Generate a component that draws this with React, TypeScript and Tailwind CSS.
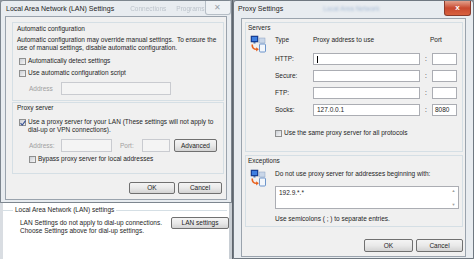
import type { ReactNode } from "react";

function Check({ checked }: { checked?: boolean }) {
  return (
    <span className="relative inline-flex h-[7px] w-[7px] shrink-0 border border-[#8e8f8f] bg-linear-to-br from-[#cbcfd5] to-[#f6f6f6]">
      {checked && (
        <svg className="absolute -left-[1px] -top-[1px]" width="8" height="8" viewBox="0 0 8 8">
          <path d="M1.5 4.2 L3.2 6 L6.6 1.6" stroke="#3d5596" strokeWidth="1.2" fill="none" />
        </svg>
      )}
    </span>
  );
}

function Btn({ children, className }: { children: ReactNode; className: string }) {
  return (
    <div
      className={`flex items-center justify-center whitespace-nowrap rounded-[2px] border border-[#707070] bg-linear-to-b from-[#f4f4f4] via-[#e9e9e9] to-[#d3d3d3] text-[#1e1e1e] ${className}`}
    >
      {children}
    </div>
  );
}

function Field({ className, children }: { className: string; children?: ReactNode }) {
  return (
    <div className={`flex items-center border border-[#abadb3] bg-white ${className}`}>{children}</div>
  );
}

function ServerIcon() {
  return (
    <svg width="17" height="18" viewBox="0 0 17 18" className="shrink-0">
      <rect x="1" y="1" width="7" height="6" fill="#1d48a8" stroke="#0d2a6a" strokeWidth="0.5" />
      <rect x="2" y="2" width="5" height="4" fill="#3f7fe0" />
      <rect x="3.5" y="7" width="2" height="1.5" fill="#4a6ea8" />
      <rect x="9" y="3" width="6" height="5" fill="#c9d6e8" stroke="#8aa0c0" strokeWidth="0.5" />
      <path d="M2.2 9.5 Q2 14.5 7 14.3" stroke="#e8601c" strokeWidth="1.6" fill="none" />
      <path d="M6.2 12.2 L8.8 14.3 L6.2 16.4 Z" fill="#e8601c" />
      <rect x="9.5" y="9" width="6" height="8" rx="1" fill="#f2f6fb" stroke="#4a7cc0" strokeWidth="0.8" />
    </svg>
  );
}

function LanDialog() {
  return (
    <div className="flex h-[203px] flex-col rounded-t-[3px] border border-[#7d868f] bg-[#e8ecf0]">
      {/* title bar */}
      <div className="flex h-[15px] items-center overflow-hidden whitespace-nowrap">
        <span className="shrink-0 pl-[5px] text-[7px] text-[#1e1e1e]">Local Area Network (LAN) Settings</span>
        <span className="ml-[16px] shrink-0 text-[#bcc3cb] blur-[0.5px]">Connections</span>
        <span className="ml-[10px] shrink-0 text-[#bcc3cb] blur-[0.5px]">Programs</span>
        <div className="ml-auto mr-[1px] flex h-[14px] w-[26px] shrink-0 items-center justify-center self-start rounded-b-[3px] border border-t-0 border-[#b6bec6] bg-[#eef1f4] text-[8px] text-[#9aa2aa]">
          ✕
        </div>
      </div>

      {/* panel */}
      <div className="mx-[4px] flex h-[184px] flex-col border border-[#9aa3ad] bg-[#f0f0f0]">
        {/* Automatic configuration */}
        <div className="ml-[6px] mt-[5px] flex w-[212px] flex-col border border-[#d5dfe5]">
          <span className="ml-[4px] mt-[2px]">Automatic configuration</span>
          <span className="ml-[4px] mt-[3px] whitespace-nowrap">
            Automatic configuration may override manual settings.&nbsp; To ensure the
            <br />
            use of manual settings, disable automatic configuration.
          </span>
          <div className="ml-[6px] mt-[5px] flex h-[8px] items-center gap-[2px]">
            <Check />
            <span>Automatically detect settings</span>
          </div>
          <div className="ml-[6px] mt-[4px] flex h-[8px] items-center gap-[2px]">
            <Check />
            <span>Use automatic configuration script</span>
          </div>
          <div className="mt-[5px] flex items-center pb-[5px]">
            <span className="ml-[16px] w-[32px] text-[#a0a0a0]">Address</span>
            <div className="h-[13px] w-[110px] border border-[#c9cbd0] bg-[#f4f4f4]" />
          </div>
        </div>

        {/* Proxy server */}
        <div className="ml-[6px] mt-[1px] flex w-[212px] flex-col border border-[#d5dfe5] pb-[10px]">
          <span className="ml-[4px] mt-[1px]">Proxy server</span>
          <div className="ml-[6px] mt-[6px] flex items-start gap-[2px]">
            <span className="mt-[1px] flex">
              <Check checked />
            </span>
            <span className="whitespace-nowrap">
              Use a proxy server for your LAN (These settings will not apply to
              <br />
              dial-up or VPN connections).
            </span>
          </div>
          <div className="mt-[5px] flex h-[13px] items-center">
            <span className="ml-[16px] w-[32px] text-[#a0a0a0]">Address:</span>
            <div className="h-[13px] w-[51px] border border-[#c9cbd0] bg-[#f4f4f4]" />
            <span className="ml-[8px] w-[22px] text-[#a0a0a0]">Port:</span>
            <div className="h-[13px] w-[28px] border border-[#c9cbd0] bg-[#f4f4f4]" />
            <Btn className="ml-[4px] h-[13px] w-[43px]">Advanced</Btn>
          </div>
          <div className="ml-[16px] mt-[3px] flex h-[8px] items-center gap-[2px]">
            <Check />
            <span>Bypass proxy server for local addresses</span>
          </div>
        </div>

        <div className="mr-[4px] mt-[8px] flex justify-end gap-[3px]">
          <Btn className="h-[12px] w-[46px]">OK</Btn>
          <Btn className="h-[12px] w-[44px]">Cancel</Btn>
        </div>
      </div>
    </div>
  );
}

function InternetOptionsPart() {
  return (
    <div className="flex flex-1 flex-col border-l-[3px] border-r-[3px] border-l-[#d9dde2] border-r-[#c8ced4] bg-white">
      <div className="mt-[3px] flex h-[8px] items-center">
        <div className="h-px w-[10px] bg-[#d5dfe5]" />
        <span className="px-[2px]">Local Area Network (LAN) settings</span>
        <div className="mr-[2px] h-px flex-1 bg-[#d5dfe5]" />
      </div>
      <div className="mt-[3px] flex">
        <span className="ml-[17px] mt-[2px] whitespace-nowrap">
          LAN Settings do not apply to dial-up connections.
          <br />
          Choose Settings above for dial-up settings.
        </span>
        <Btn className="ml-auto h-[12px] w-[58px]">LAN settings</Btn>
      </div>
    </div>
  );
}

function ProxyDialog() {
  const rows = [
    { label: "HTTP:", addr: "", port: "", caret: true },
    { label: "Secure:", addr: "", port: "" },
    { label: "FTP:", addr: "", port: "" },
    { label: "Socks:", addr: "127.0.0.1", port: "8080" },
  ];

  return (
    <div className="flex flex-1 flex-col rounded-t-[3px] border border-[#6f7881] bg-[#e8ecf0]">
      {/* title bar */}
      <div className="flex h-[16px] items-center overflow-hidden whitespace-nowrap">
        <span className="shrink-0 pl-[4px] text-[7px]">Proxy Settings</span>
        <span className="ml-[40px] shrink-0 text-[#a9bdd6] blur-[0.8px]">Local Area Network</span>
        <div className="ml-auto mr-[2px] flex h-[15px] w-[27px] shrink-0 items-center justify-center self-start rounded-b-[3px] border border-t-0 border-[#8a3b2c] bg-linear-to-b from-[#e2a08c] via-[#c8492f] to-[#d8613f] text-[8px] font-bold text-white">
          x
        </div>
      </div>

      {/* panel */}
      <div className="mb-[1px] ml-[7px] mr-[7px] mt-[1px] flex flex-1 flex-col border border-[#9aa3ad] bg-[#f0f0f0]">
        {/* Servers */}
        <div className="ml-[3px] mt-[3px] flex w-[218px] flex-col border border-[#d5dfe5] pb-[14px]">
          <span className="ml-[2px] mt-[1px]">Servers</span>
          <div className="mt-[3px] flex">
            <div className="ml-[4px]">
              <ServerIcon />
            </div>
            <div className="ml-[8px] flex flex-col">
              <div className="mt-[1px] flex h-[8px]">
                <span className="w-[38px]">Type</span>
                <span className="w-[117px]">Proxy address to use</span>
                <span>Port</span>
              </div>
              <div className="mt-[9px] flex flex-col gap-[5px]">
                {rows.map((r) => (
                  <div key={r.label} className="flex h-[12px] items-center">
                    <span className="w-[38px]">{r.label}</span>
                    <Field className="h-[12px] w-[107px] pl-[3px]">
                      {r.caret && <span className="h-[7px] w-px bg-black" />}
                      {r.addr}
                    </Field>
                    <span className="w-[12px] text-center">:</span>
                    <Field className="h-[12px] w-[25px] pl-[2px]">{r.port}</Field>
                  </div>
                ))}
              </div>
              <div className="mt-[13px] flex h-[8px] items-center gap-[2px]">
                <Check />
                <span>Use the same proxy server for all protocols</span>
              </div>
            </div>
          </div>
        </div>

        {/* Exceptions */}
        <div className="ml-[3px] mt-[3px] flex w-[218px] flex-col border border-[#d5dfe5] pb-[3px]">
          <span className="ml-[2px] mt-[1px]">Exceptions</span>
          <div className="mt-[4px] flex">
            <div className="ml-[4px]">
              <ServerIcon />
            </div>
            <div className="ml-[8px] flex flex-col">
              <span className="mt-[1px]">Do not use proxy server for addresses beginning with:</span>
              <div className="mt-[8px] flex h-[23px] w-[184px] border border-[#abadb3] bg-white">
                <span className="flex-1 pl-[3px] pt-[2px]">192.9.*.*</span>
                <div className="flex w-[9px] flex-col items-center justify-between py-[1px] text-[4px] leading-[5px] text-[#a0a0a0]">
                  <span>▲</span>
                  <span>▼</span>
                </div>
              </div>
              <span className="mt-[6px]">Use semicolons ( ; ) to separate entries.</span>
            </div>
          </div>
        </div>

        <div className="mr-[2px] mt-[12px] flex justify-end gap-[3px]">
          <Btn className="h-[13px] w-[49px]">OK</Btn>
          <Btn className="h-[13px] w-[47px]">Cancel</Btn>
        </div>
      </div>
    </div>
  );
}

export default function App() {
  return (
    <div className="flex h-[259px] w-[474px] overflow-hidden bg-[#8d949c] font-['Liberation_Sans',Arial,sans-serif] text-[6.5px] leading-[8px] text-[#1e1e1e]">
      <div className="flex w-[233px] flex-col border-r border-r-[#5f666e]">
        <LanDialog />
        <InternetOptionsPart />
      </div>
      <ProxyDialog />
    </div>
  );
}
